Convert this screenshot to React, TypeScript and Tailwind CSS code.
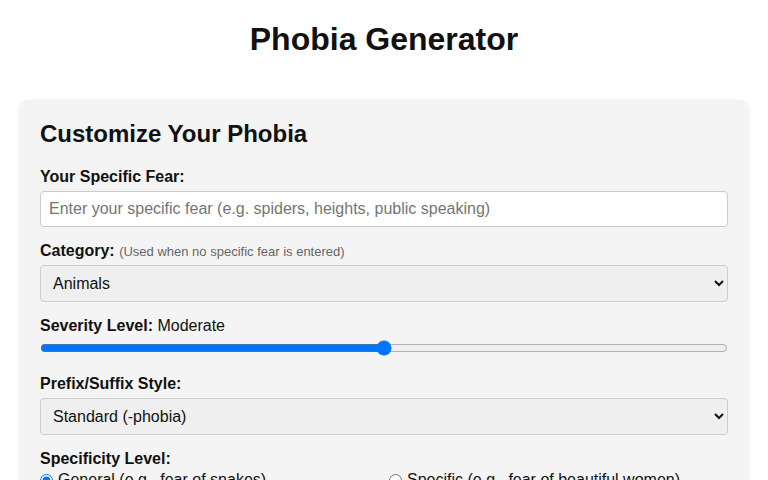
import { useState } from "react";

const severityNames = ["Mild", "Slight", "Moderate", "Severe", "Extreme"];

export default function App() {
  const [fear, setFear] = useState("");
  const [category, setCategory] = useState("animals");
  const [severity, setSeverity] = useState(3);
  const [style, setStyle] = useState("standard");
  const [specificity, setSpecificity] = useState("general");

  return (
    <div className="min-h-screen bg-white font-['Liberation_Sans',Arial,sans-serif] leading-[normal] text-[16px] text-[#111]">
      <h1 className="mt-[21px] mb-[42px] text-center text-[32px] font-bold">
        Phobia Generator
      </h1>

      <div className="mx-5 rounded-lg bg-[#f4f4f4] p-5 shadow-[0_2px_5px_rgba(0,0,0,0.1)]">
        <h2 className="mb-5 text-[24px] font-bold">Customize Your Phobia</h2>

        <div className="mb-[15px]">
          <label className="mb-[5px] block font-bold">Your Specific Fear:</label>
          <input
            type="text"
            value={fear}
            onChange={(e) => setFear(e.target.value)}
            placeholder="Enter your specific fear (e.g. spiders, heights, public speaking)"
            className="block w-full rounded border border-[#ccc] bg-white p-2 placeholder:text-[#757575]"
          />
        </div>

        <div className="mb-[15px]">
          <label className="mb-[5px] block">
            <span className="font-bold">Category:</span>{" "}
            <span className="text-[13px] text-[#666]">
              (Used when no specific fear is entered)
            </span>
          </label>
          <select
            value={category}
            onChange={(e) => setCategory(e.target.value)}
            className="block w-full rounded border border-[#ccc] bg-[#efefef] p-2"
          >
            <option value="animals">Animals</option>
            <option value="objects">Objects</option>
            <option value="situations">Situations</option>
            <option value="nature">Nature</option>
          </select>
        </div>

        <div className="mb-[19px]">
          <label className="mb-[5px] block">
            <span className="font-bold">Severity Level:</span>{" "}
            {severityNames[severity - 1]}
          </label>
          <input
            type="range"
            min={1}
            max={5}
            value={severity}
            onChange={(e) => setSeverity(Number(e.target.value))}
            className="mt-[2px] block w-full"
          />
        </div>

        <div className="mb-[15px]">
          <label className="mb-[5px] block font-bold">Prefix/Suffix Style:</label>
          <select
            value={style}
            onChange={(e) => setStyle(e.target.value)}
            className="block w-full rounded border border-[#ccc] bg-[#efefef] p-2"
          >
            <option value="standard">Standard (-phobia)</option>
            <option value="greek">Greek roots</option>
            <option value="latin">Latin roots</option>
          </select>
        </div>

        <div className="mb-[15px]">
          <label className="mb-[3px] block font-bold">Specificity Level:</label>
          <div className="flex gap-[10px]">
            <label className="flex flex-1 items-center">
              <input
                type="radio"
                name="specificity"
                checked={specificity === "general"}
                onChange={() => setSpecificity("general")}
                className="mr-[5px]"
              />
              General (e.g., fear of snakes)
            </label>
            <label className="flex flex-1 items-center">
              <input
                type="radio"
                name="specificity"
                checked={specificity === "specific"}
                onChange={() => setSpecificity("specific")}
                className="mr-[5px]"
              />
              Specific (e.g., fear of beautiful women)
            </label>
          </div>
        </div>
      </div>
    </div>
  );
}
